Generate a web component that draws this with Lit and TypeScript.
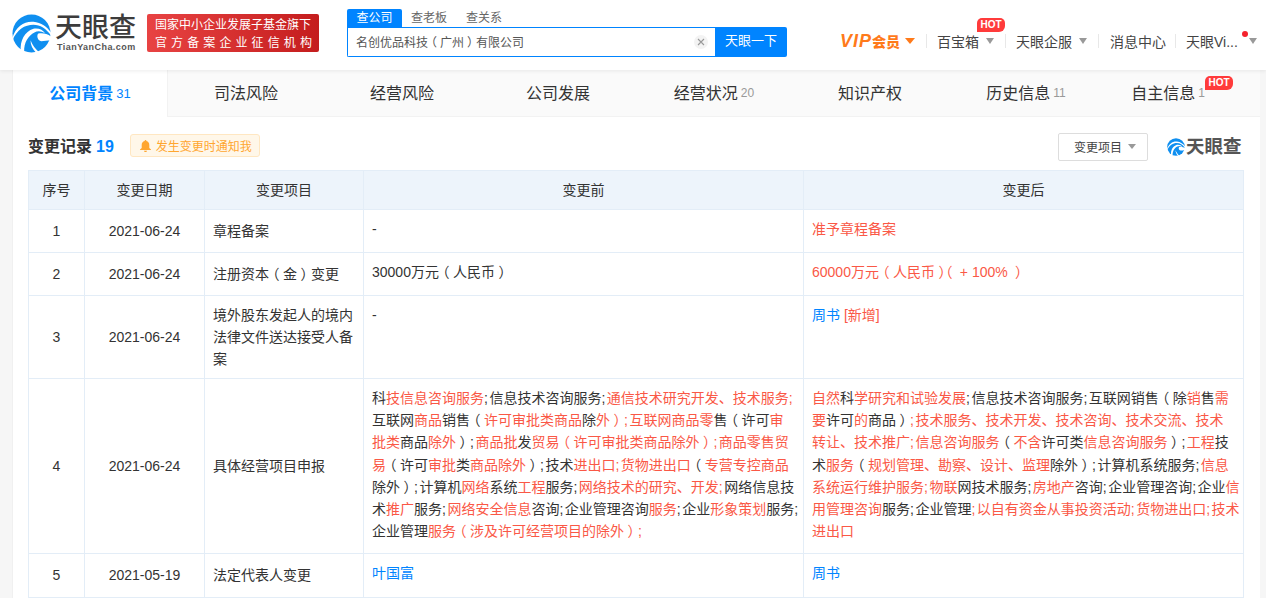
import { LitElement, html, css, svg } from "lit";
import { customElement } from "lit/decorators.js";

// Alternating plain / red segments, separated by |. ^ marks a line end of the reference.
const BEFORE4 =
  "科|技信息咨询服务|;信息技术咨询服务;|通信技术研究开发、技术服务;|^互联网|商品|销售（|许可审批类商品|除|外）;互联网商品零|售（许可|审^批类|商品|除外|）;|商品批|发|贸易（许可审批类商品除外）;商品零售贸^易|（许可|审批|类|商品除外|）;技术|进出口;货物进出口|（|专营专控商品|^除外）;计算机|网络|系统|工程|服务;|网络技术的研究、开发;|网络信息技^术|推广|服务;|网络安全信息|咨询;企业管理咨询|服务|;企业|形象策划|服务;^企业管理|服务（涉及许可经营项目的除外）;";
const AFTER4 =
  "|自然|科|学研究和试验发展|;信息技术咨询服务;互联网销售（除|销|售|需^要|许可|的|商品）|;技术服务、技术开发、技术咨询、技术交流、技术^转让、技术推广;信息咨询服务|（|不含|许可类|信息咨询服务|）;|工程|技^术|服务|（|规划管理、勘察、设计、监理|除外）;计算机系统服务;|信息^系统运行维护服务;物联|网技术服务;|房地产|咨询;企业管理咨询;企业|信^用管理咨询|服务;企业管理|;以自有资金从事投资活动;货物进出口;技术^进出口";

// The reference's full-width brackets sit centred in their box and its semicolons run wide.
const fmt = (s: string) =>
  s.split(/([（）;^])/).map((t) => {
    if (t === "（") return html`<span class="po">${t}</span>`;
    if (t === "）") return html`<span class="pc">${t}</span>`;
    if (t === ";") return html`<span class="semi">;</span>`;
    if (t === "^") return html`<br />`;
    return t;
  });

const segs = (s: string) =>
  s.split("|").map((t, i) => (i % 2 ? html`<span class="red">${fmt(t)}</span>` : fmt(t)));

const logoMark = (cls: string) => html`<svg class=${cls} viewBox="0 0 40 40" aria-hidden="true">
  ${svg`<circle cx="20" cy="20" r="19.500" fill="#0f8ff0"/>
  <path d="M.5 24C4 13 13 7 22 8 30 9 36 13 40 19L40 22C35 15 29 11 22 11 13 11 5 16 .5 27Z" fill="#fff"/>
  <path d="M9 38C8 27 13 18 22 15 27 14 32 16 34 20 30 17 26 17 23 19 17 22 12 29 12.500 39Z" fill="#fff"/>
  <path d="M27 20C31 19 36 20 40 23L40 27C36 27 33 28 30 28 26 27 25 22 27 20Z" fill="#fff"/>
  <path d="M19 27C19 32 21 36 25 40L28 39.500C24 36 21 32 19 27Z" fill="#fff"/>`}
</svg>`;

@customElement("app-root")
export class AppRoot extends LitElement {
  static styles = css`
    :host {
      display: block;
      width: 1266px;
      height: 598px;
      overflow: hidden;
      background: #f6f6f6;
      font-family: "Liberation Sans", "Noto Sans CJK SC", sans-serif;
      font-size: 14px;
      color: #333;
    }
    * { box-sizing: border-box; }
    .po { margin-left: -0.25em; margin-right: 0.25em; }
    .pc { margin-left: 0.25em; margin-right: -0.25em; }
    .semi { letter-spacing: 1.5px; }
    .header {
      display: flex;
      align-items: flex-start;
      height: 70px;
      padding-left: 12px;
      background: #fff;
      box-shadow: 0 1px 4px rgba(0, 0, 0, 0.08);
      position: relative;
    }
    .logo { display: flex; width: 123px; margin-top: 14px; }
    .logo-mark { width: 39px; height: 39px; flex: none; }
    .logo-text { margin-left: 4px; display: flex; flex-direction: column; }
    .logo-cn {
      font-size: 27px;
      line-height: 29px;
      height: 28px;
      color: #3c3c3c;
      font-weight: 500;
      white-space: nowrap;
    }
    .logo-en {
      font-size: 9px;
      line-height: 11px;
      font-weight: 700;
      color: #555;
      padding-left: 2px;
      letter-spacing: 0.45px;
      white-space: nowrap;
    }
    .banner {
      width: 172px;
      height: 38px;
      margin: 14px 0 0 12px;
      padding: 2px 8px 0;
      border-radius: 2px;
      background: linear-gradient(90deg, #e84343, #c41d1d);
      color: #fff;
      font-size: 12px;
      line-height: 18px;
      white-space: nowrap;
    }
    .banner .b2 { letter-spacing: 4.1px; }
    .search { width: 440px; margin: 9px 0 0 28px; }
    .stabs { display: flex; height: 18px; font-size: 12px; line-height: 18px; color: #666; }
    .stab { margin-left: 19px; }
    .stab.first { margin-left: 9px; }
    .stab.on {
      width: 55px;
      margin: 0;
      text-align: center;
      background: #0084ff;
      color: #fff;
      border-radius: 2px 2px 0 0;
    }
    .sbox { display: flex; height: 30px; }
    .sinput {
      flex: 1;
      display: flex;
      align-items: center;
      justify-content: space-between;
      padding: 0 7px 1px 8px;
      border: 1px solid #0084ff;
      border-right: 0;
      border-radius: 0 0 0 2px;
      font-size: 12px;
      color: #555;
    }
    .clear {
      width: 14px;
      height: 14px;
      border-radius: 50%;
      background: #f3f3f3;
      display: flex;
      align-items: center;
      justify-content: center;
    }
    .clear svg { width: 8px; height: 8px; }
    .sbtn {
      width: 72px;
      background: #0084ff;
      color: #fff;
      font-size: 13px;
      text-align: center;
      line-height: 28px;
      border-radius: 0 2px 2px 0;
    }
    .nav { display: flex; align-items: center; height: 20px; margin: 31px 0 0 53px; white-space: nowrap; color: #444; }
    .arrow {
      width: 0;
      height: 0;
      border-left: 4.5px solid transparent;
      border-right: 4.5px solid transparent;
      border-top: 6px solid #999;
      margin-left: 7px;
      flex: none;
    }
    .arrow.or { border-left-width: 5px; border-right-width: 5px; border-top-color: #ff7a1a; margin-left: 5px; }
    .sep { width: 1px; height: 14px; background: #e8e8e8; margin: 0 10px 0 11px; flex: none; }
    .sep.wide { margin-right: 11px; }
    .sep.tight { margin-left: 9px; }
    .arrow.end { margin-left: 11px; }
    .vip { color: #ff7a1a; font-weight: 700; width: 60px; display: flex; align-items: baseline; }
    .vip i { font-size: 18px; font-style: italic; font-weight: 700; letter-spacing: 1px; margin-right: 0; }
    .vip b { font-size: 14px; }
    .rel { position: relative; display: flex; align-items: center; }
    .hot {
      position: absolute;
      display: block;
      width: 28px;
      height: 14px;
      background: #ff3b3b;
      color: #fff;
      font-size: 10px;
      font-weight: 700;
      line-height: 14px;
      text-align: center;
      border-radius: 5px 5px 6px 0;
    }
    .nav .hot { left: 40px; top: -13px; }
    .dot {
      position: absolute;
      right: -10px;
      top: 0;
      width: 6px;
      height: 6px;
      border-radius: 50%;
      background: #f5222d;
    }
    .card { margin: 0 6px 0 12px; background: #fff; border-left: 1px solid #f0f0f0; height: 528px; overflow: hidden; }
    .tabs { display: flex; height: 47px; background: #fafafa; margin-left: -1px; }
    .tab {
      flex: 0 0 156px;
      display: flex;
      align-items: center;
      justify-content: center;
      font-size: 16px;
      color: #333;
      box-shadow: inset 0 -1px 0 #f2f2f2;
      padding-bottom: 3px;
    }
    .tab.on { background: #fff; color: #0084ff; font-weight: 700; box-shadow: inset -1px 0 0 #f2f2f2; }
    .tab small { font-size: 12px; font-weight: 400; color: #999; margin-left: 3px; margin-top: 2px; }
    .tab.on small { color: #0084ff; font-size: 13px; }
    .last { position: relative; padding-right: 28px; }
    .tab .hot { left: 101px; top: 6px; }
    .body { padding: 0 0 0 15px; }
    .bar { display: flex; align-items: center; width: 1213px; height: 29px; margin: 15px 0 9px; }
    .title { font-size: 16px; font-weight: 700; color: #333; margin-bottom: 4px; }
    .title span { color: #0084ff; margin-left: 4px; }
    .notice {
      display: flex;
      align-items: center;
      height: 23px;
      margin: 0 0 2px 16px;
      padding: 0 7px 0 9px;
      background: #fff7e9;
      border: 1px solid #ffe7c2;
      border-radius: 3px;
      font-size: 12px;
      color: #ffa630;
    }
    .notice svg { width: 11px; height: 12px; margin-right: 5px; }
    .grow { flex: 1; }
    .pick {
      display: flex;
      align-items: center;
      width: 90px;
      height: 28px;
      padding-left: 15px;
      border: 1px solid #ddd;
      border-radius: 2px;
      font-size: 12px;
      color: #444;
    }
    .pick .arrow { border-width: 5px 4px 0; margin-left: 6px; }
    .mini { display: flex; align-items: center; margin-left: 19px; width: 74px; }
    .mini-mark { width: 18px; height: 18px; flex: none; }
    .mini span { font-size: 18.5px; line-height: 20px; font-weight: 700; color: #555; white-space: nowrap; margin-left: 1px; }
    table { width: 1215px; table-layout: fixed; border-collapse: collapse; }
    .w1 { width: 56px; }
    .w2 { width: 120px; }
    .w3 { width: 159px; }
    .w4, .w5 { width: 440px; }
    th, td { border: 1px solid #e3edf7; font-size: 14px; line-height: 22.2px; padding: 8px; }
    th { background: #edf4fb; font-weight: 400; color: #333; height: 39px; text-align: center; padding: 0; }
    td { vertical-align: top; color: #333; }
    td.c { text-align: center; vertical-align: middle; padding: 0; }
    td.m { vertical-align: middle; padding-top: 7px; padding-bottom: 7px; }
    td.nw { white-space: nowrap; }
    .h43 td { height: 43px; }
    .h83 td { height: 83px; }
    .h175 td { height: 175px; }
    .h44 td { height: 44px; }
    td.red, .red { color: #fa5846; }
    td.blue, .blue { color: #0084ff; }
  `;

  render() {
    const tabs: [string, string][] = [
      ["司法风险", ""],
      ["经营风险", ""],
      ["公司发展", ""],
      ["经营状况", "20"],
      ["知识产权", ""],
      ["历史信息", "11"],
    ];
    return html`
      <div class="header">
        <div class="logo">
          ${logoMark("logo-mark")}
          <div class="logo-text">
            <div class="logo-cn">天眼查</div>
            <div class="logo-en">TianYanCha.com</div>
          </div>
        </div>
        <div class="banner">
          <div>国家中小企业发展子基金旗下</div>
          <div class="b2">官方备案企业征信机构</div>
        </div>
        <div class="search">
          <div class="stabs">
            <div class="stab on">查公司</div>
            <div class="stab first">查老板</div>
            <div class="stab">查关系</div>
          </div>
          <div class="sbox">
            <div class="sinput">
              <span>${fmt("名创优品科技（广州）有限公司")}</span>
              <span class="clear"><svg viewBox="0 0 8 8"><path d="M1 1l6 6M7 1L1 7" stroke="#999" stroke-width="1.1" fill="none"/></svg></span>
            </div>
            <div class="sbtn">天眼一下</div>
          </div>
        </div>
        <div class="nav">
          <span class="vip"><i>VIP</i><b>会员</b></span>
          <span class="arrow or"></span>
          <span class="sep"></span>
          <span class="rel">百宝箱<span class="hot">HOT</span></span>
          <span class="arrow"></span>
          <span class="sep"></span>
          <span>天眼企服</span>
          <span class="arrow"></span>
          <span class="sep wide"></span>
          <span>消息中心</span>
          <span class="sep tight"></span>
          <span class="rel">天眼Vi...<span class="dot"></span></span>
          <span class="arrow end"></span>
        </div>
      </div>
      <div class="card">
        <div class="tabs">
          <div class="tab on">公司背景<small>31</small></div>
          ${tabs.map(([t, n]) => html`<div class="tab">${t}${n ? html`<small>${n}</small>` : ""}</div>`)}
          <div class="tab last">自主信息<small>1</small><span class="hot">HOT</span></div>
        </div>
        <div class="body">
          <div class="bar">
            <div class="title">变更记录<span>19</span></div>
            <div class="notice">
              <svg viewBox="0 0 11 12"><path d="M5.5 0C6 0 6.4.4 6.4 1 8.3 1.5 9.3 3 9.3 5V8L11 9.5V10H0V9.5L1.7 8V5C1.7 3 2.7 1.5 4.6 1 4.6.4 5 0 5.5 0ZM4 10.7H7C7 11.5 6.3 12 5.5 12S4 11.5 4 10.7Z" fill="#ffa630"/></svg>
              发生变更时通知我
            </div>
            <div class="grow"></div>
            <div class="pick">变更项目<span class="arrow"></span></div>
            <div class="mini">${logoMark("mini-mark")}<span>天眼查</span></div>
          </div>
          <table>
            <colgroup><col class="w1" /><col class="w2" /><col class="w3" /><col class="w4" /><col class="w5" /></colgroup>
            <tr><th>序号</th><th>变更日期</th><th>变更项目</th><th>变更前</th><th>变更后</th></tr>
            <tr class="h43">
              <td class="c">1</td><td class="c">2021-06-24</td><td class="m">章程备案</td>
              <td>-</td><td class="red">准予章程备案</td>
            </tr>
            <tr class="h43">
              <td class="c">2</td><td class="c">2021-06-24</td><td class="m">${fmt("注册资本（金）变更")}</td>
              <td>${fmt("30000万元（人民币）")}</td><td class="red">${fmt("60000万元（人民币）（ + 100% ）")}</td>
            </tr>
            <tr class="h83">
              <td class="c">3</td><td class="c">2021-06-24</td><td class="m">境外股东发起人的境内法律文件送达接受人备案</td>
              <td>-</td><td><span class="blue">周书</span> <span class="red">[新增]</span></td>
            </tr>
            <tr class="h175">
              <td class="c">4</td><td class="c">2021-06-24</td><td class="m">具体经营项目申报</td>
              <td class="nw">${segs(BEFORE4)}</td><td class="nw">${segs(AFTER4)}</td>
            </tr>
            <tr class="h44">
              <td class="c">5</td><td class="c">2021-05-19</td><td class="m">法定代表人变更</td>
              <td class="blue">叶国富</td><td class="blue">周书</td>
            </tr>
            <tr class="h44"><td></td><td></td><td></td><td></td><td></td></tr>
          </table>
        </div>
      </div>
    `;
  }
}
